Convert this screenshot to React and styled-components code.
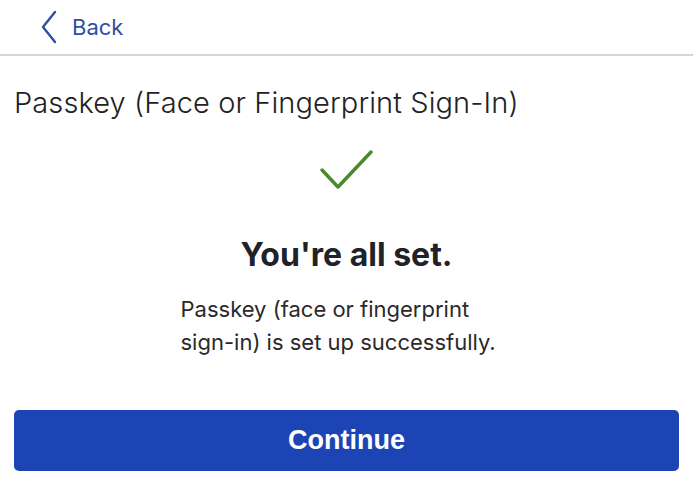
import React from 'react';
import styled, { createGlobalStyle } from 'styled-components';

const GlobalStyle = createGlobalStyle`
  html, body {
    margin: 0;
    padding: 0;
    background: #ffffff;
  }
  body {
    font-family: Inter, "Liberation Sans", sans-serif;
    width: 693px;
    height: 495px;
    overflow: hidden;
  }
`;

const Page = styled.div`
  display: flex;
  flex-direction: column;
  width: 693px;
  height: 495px;
`;

const TopBar = styled.header`
  display: flex;
  align-items: center;
  height: 54px;
  padding-left: 40px;
  border-bottom: 2px solid #d6d6d6;
  box-sizing: content-box;
`;

const BackButton = styled.button`
  display: flex;
  align-items: center;
  gap: 14px;
  background: none;
  border: 0;
  padding: 0;
  color: #2f4fa3;
  font-family: Inter, "Liberation Sans", sans-serif;
  font-size: 22px;
  font-weight: 400;
  cursor: pointer;
`;

const Content = styled.main`
  display: flex;
  flex-direction: column;
  padding: 29px 14px 0;
`;

const Title = styled.h1`
  margin: 0;
  font-size: 29px;
  font-weight: 300;
  color: #222;
  letter-spacing: 0.1px;
  line-height: 36px;
`;

const CheckWrap = styled.div`
  display: flex;
  justify-content: center;
  margin-top: 28px;
`;

const Heading = styled.h2`
  margin: 42px 0 0;
  text-align: center;
  font-size: 32px;
  font-weight: 700;
  color: #1f2328;
  line-height: 36px;
`;

const Message = styled.p`
  align-self: center;
  width: 330px;
  margin: 20px 0 0 -2px;
  font-size: 22px;
  line-height: 33px;
  font-weight: 400;
  color: #2a2a2a;
`;

const PrimaryButton = styled.button`
  margin-top: 51px;
  height: 61px;
  border: 0;
  border-radius: 5px;
  background: #1c44b5;
  color: #ffffff;
  font-family: "Liberation Sans", Arial, sans-serif;
  font-size: 27px;
  font-weight: 700;
  cursor: pointer;
`;

const App = () => {
  return (
    <Page>
      <GlobalStyle />
      <TopBar>
        <BackButton>
          <svg width="18" height="34" viewBox="0 0 18 34" fill="none">
            <path d="M15 2 L3 17 L15 32" stroke="#2f4fa3" strokeWidth="2.4" strokeLinecap="round" strokeLinejoin="round" />
          </svg>
          Back
        </BackButton>
      </TopBar>
      <Content>
        <Title>Passkey (Face or Fingerprint Sign-In)</Title>
        <CheckWrap>
          <svg width="56" height="46" viewBox="0 0 56 46" fill="none">
            <path d="M3 21 L19 38 L52 3" stroke="#4b8a2b" strokeWidth="3.5" strokeLinecap="round" strokeLinejoin="round" />
          </svg>
        </CheckWrap>
        <Heading>You're all set.</Heading>
        <Message>Passkey (face or fingerprint sign-in) is set up successfully.</Message>
        <PrimaryButton>Continue</PrimaryButton>
      </Content>
    </Page>
  );
};

export default App;
